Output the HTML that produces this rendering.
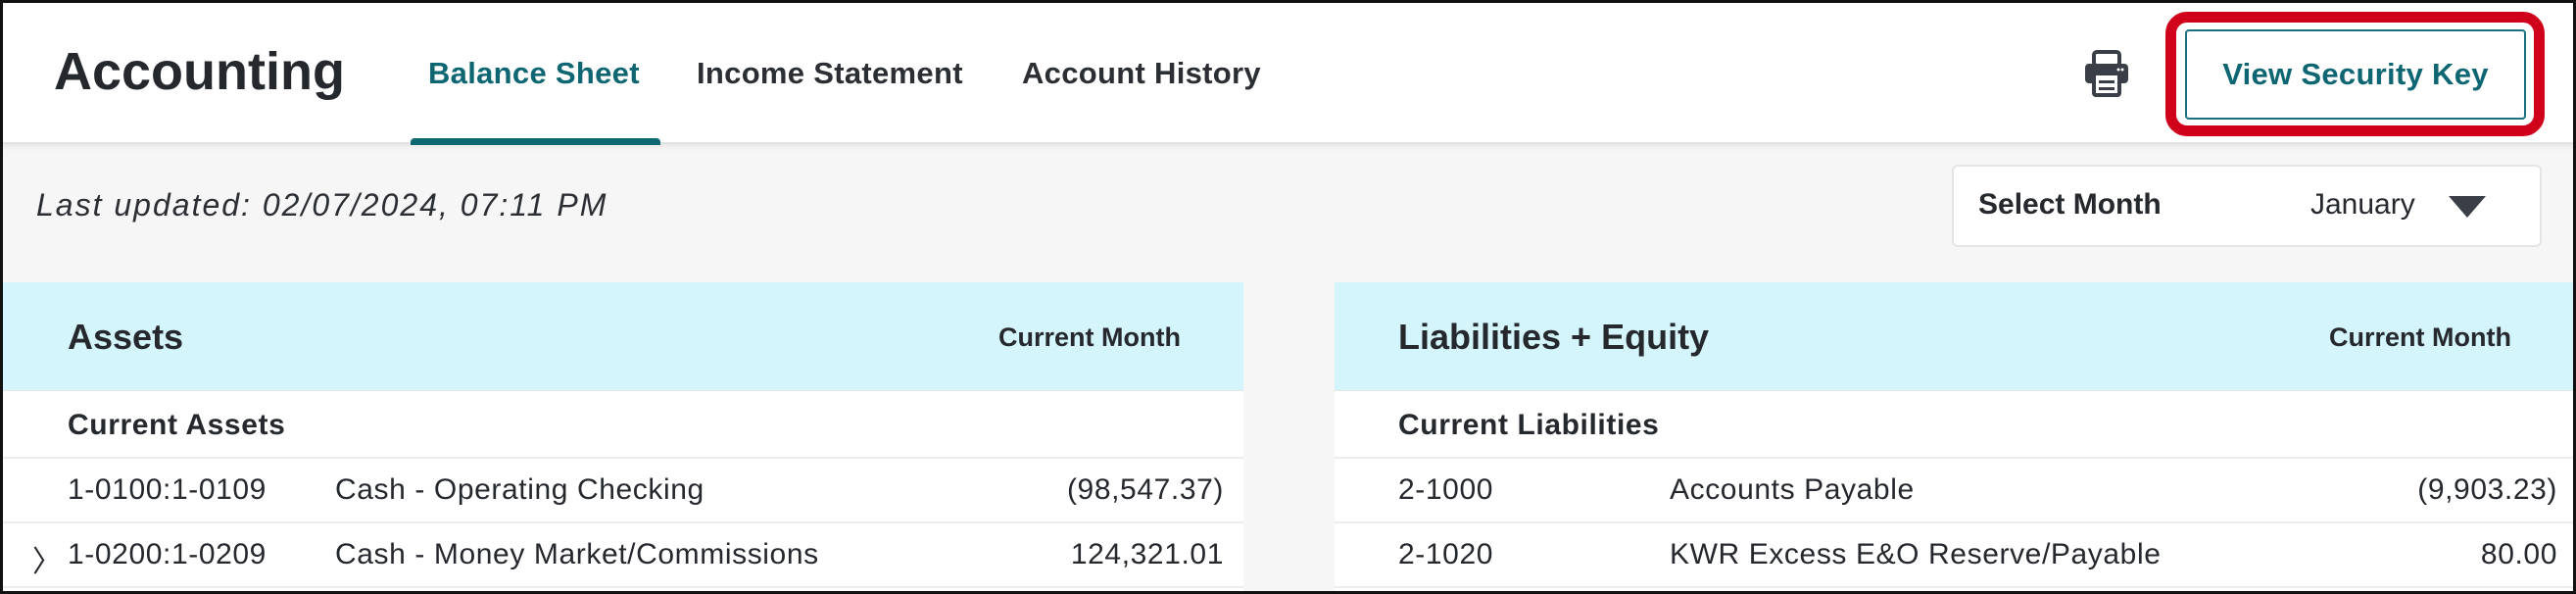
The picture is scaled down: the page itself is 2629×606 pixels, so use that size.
<!DOCTYPE html>
<html><head><meta charset="utf-8"><style>
*{margin:0;padding:0;box-sizing:border-box}
body{width:2629px;height:606px;overflow:hidden;background:#f6f6f6;font-family:"Liberation Sans",sans-serif;color:#25282d;position:relative}
.a{position:absolute;white-space:nowrap}
.frame{position:absolute;left:0;top:0;width:2629px;height:606px;border:3px solid #111;z-index:10;pointer-events:none}
.hdr{position:absolute;left:0;top:0;width:2629px;height:147px;background:#fff;border-bottom:2px solid #e2e2e2;box-shadow:0 3px 6px rgba(0,0,0,.06)}
.tab{font-size:31px;font-weight:bold;top:57px;color:#2b2e33;letter-spacing:0.3px}
.panel{position:absolute;top:288px;background:#fff;height:318px}
.ph{position:absolute;left:0;top:0;right:0;height:111px;background:#d4f5fc;border-bottom:1px solid #e6e6e6}
.row{position:absolute;left:0;right:0;border-bottom:2px solid #ececec}
.t{font-size:30px;color:#25282d;letter-spacing:0.6px}
</style></head><body>
<div class="hdr"></div>
<div class="a" style="left:55px;top:42px;font-size:54px;font-weight:bold;color:#25282d">Accounting</div>
<div class="a tab" style="left:437px;color:#0f6673">Balance Sheet</div>
<div style="position:absolute;left:419px;top:141px;width:255px;height:7px;background:#0f6673;border-radius:4px 4px 0 0"></div>
<div class="a tab" style="left:711px">Income Statement</div>
<div class="a tab" style="left:1043px">Account History</div>
<svg class="a" style="left:2124px;top:49px" width="52" height="52" viewBox="0 0 52 52">
<rect x="13" y="4" width="26" height="14" rx="3" fill="none" stroke="#3a3e46" stroke-width="4"/>
<rect x="4" y="16" width="44" height="20" rx="4" fill="#3a3e46"/>
<rect x="13" y="26" width="26" height="22" rx="2" fill="#fff" stroke="#3a3e46" stroke-width="4"/>
<rect x="18" y="33" width="16" height="3" fill="#3a3e46"/><rect x="18" y="40" width="16" height="3" fill="#3a3e46"/>
<circle cx="38" cy="22" r="1.5" fill="#fff"/><circle cx="42" cy="22" r="1.5" fill="#fff"/>
</svg>
<div style="position:absolute;left:2210px;top:12px;width:387px;height:127px;border:11px solid #d0021b;border-radius:22px"></div>
<div style="position:absolute;left:2230px;top:30px;width:348px;height:92px;border:2px solid #1b6f7c;border-radius:4px;background:#fff;color:#0f6673;font-weight:bold;font-size:31px;line-height:88px;text-align:center;letter-spacing:0.3px">View Security Key</div>
<div class="a" style="left:37px;top:191px;font-size:32px;font-style:italic;color:#2b2e33;letter-spacing:2px">Last updated: 02/07/2024, 07:11 PM</div>
<div style="position:absolute;left:1992px;top:168px;width:602px;height:84px;background:#fff;border:2px solid #e4e4e4;border-radius:6px"></div>
<div class="a" style="left:2019px;top:192px;font-size:30px;font-weight:bold">Select Month</div>
<div class="a" style="left:2358px;top:192px;font-size:30px">January</div>
<svg class="a" style="left:2499px;top:200px" width="38" height="22"><polygon points="0,0 38,0 19,22" fill="#3a3e46"/></svg>

<div class="panel" style="left:3px;width:1266px">
 <div class="ph"></div>
 <div class="a" style="left:66px;top:35px;font-size:36px;font-weight:bold">Assets</div>
 <div class="a" style="right:64px;top:41px;font-size:27px;font-weight:bold">Current Month</div>
 <div class="row" style="top:111px;height:69px"></div>
 <div class="a t" style="left:66px;top:129px;font-weight:bold">Current Assets</div>
 <div class="row" style="top:180px;height:66px"></div>
 <div class="a t" style="left:66px;top:195px">1-0100:1-0109</div>
 <div class="a t" style="left:339px;top:195px">Cash - Operating Checking</div>
 <div class="a t" style="right:20px;top:195px">(98,547.37)</div>
 <div class="row" style="top:246px;height:66px"></div>
 <div class="a t" style="left:30px;top:260px;font-size:30px">〉</div>
 <div class="a t" style="left:66px;top:261px">1-0200:1-0209</div>
 <div class="a t" style="left:339px;top:261px">Cash - Money Market/Commissions</div>
 <div class="a t" style="right:20px;top:261px">124,321.01</div>
</div>

<div class="panel" style="left:1362px;width:1267px">
 <div class="ph"></div>
 <div class="a" style="left:65px;top:35px;font-size:36px;font-weight:bold">Liabilities + Equity</div>
 <div class="a" style="right:66px;top:41px;font-size:27px;font-weight:bold">Current Month</div>
 <div class="row" style="top:111px;height:69px"></div>
 <div class="a t" style="left:65px;top:129px;font-weight:bold">Current Liabilities</div>
 <div class="row" style="top:180px;height:66px"></div>
 <div class="a t" style="left:65px;top:195px">2-1000</div>
 <div class="a t" style="left:342px;top:195px">Accounts Payable</div>
 <div class="a t" style="right:19px;top:195px">(9,903.23)</div>
 <div class="row" style="top:246px;height:66px"></div>
 <div class="a t" style="left:65px;top:261px">2-1020</div>
 <div class="a t" style="left:342px;top:261px">KWR Excess E&amp;O Reserve/Payable</div>
 <div class="a t" style="right:19px;top:261px">80.00</div>
</div>
<div class="frame"></div>
</body></html>
